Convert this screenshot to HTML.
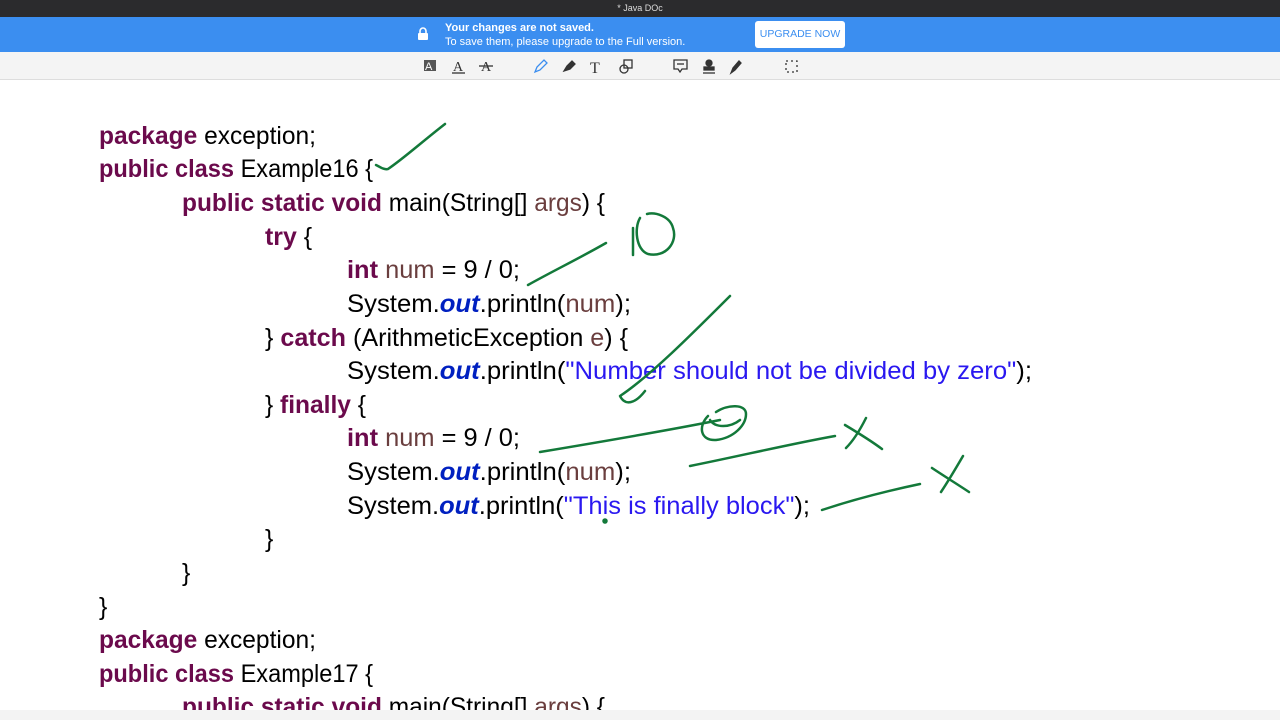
<!DOCTYPE html>
<html><head><meta charset="utf-8"><style>
body{margin:0;width:1280px;height:720px;overflow:hidden;background:#fff;font-family:"Liberation Sans",sans-serif;position:relative}
.top{position:absolute;left:0;top:0;width:1280px;height:17px;background:#2b2b2d;color:#ddd;font-size:9px;text-align:center;line-height:16px}
.ban{position:absolute;left:0;top:17px;width:1280px;height:35px;background:#3b8ef0;color:#fff}
.ban .t{position:absolute;left:445px;top:4px;font-size:11px;line-height:14px}
.ban .b{position:absolute;left:755px;top:4px;width:90px;height:27px;background:#fff;border-radius:3px;color:#3b8ef0;font-size:10.5px;text-align:center;line-height:27px}
.tb{position:absolute;left:0;top:52px;width:1280px;height:27px;background:#f4f4f4;border-bottom:1px solid #ddd}
.k{fill:#6b0a4c;font-weight:bold}.v{fill:#6a3e3e}.o{fill:#0020c0;font-weight:bold;font-style:italic}.s{fill:#2a18f0}
</style></head><body>
<div class="top">* Java DOc</div>
<div class="ban">
<svg style="position:absolute;left:417px;top:10px" width="12" height="14"><path d="M3 6V4a3 3 0 0 1 6 0v2" stroke="#fff" stroke-width="1.6" fill="none"/><rect x="1" y="6" width="10" height="7" rx="1" fill="#fff"/></svg>
<div class="t"><b>Your changes are not saved.</b><br>To save them, please upgrade to the Full version.</div>
<div class="b">UPGRADE NOW</div></div>
<div class="tb">
<svg width="1280" height="27" style="position:absolute;left:0;top:0" fill="none" stroke="#333" stroke-width="1.3">
<rect x="424" y="8" width="12" height="11" fill="#555" stroke="none"/><text x="425" y="18" font-size="11" fill="#fff" stroke="none">A</text>
<text x="453" y="19" font-size="14" font-family="Liberation Serif" fill="#333" stroke="none">A</text><line x1="452" y1="21" x2="465" y2="21"/>
<text x="481" y="19" font-size="14" font-family="Liberation Serif" fill="#333" stroke="none">A</text><line x1="479" y1="14" x2="493" y2="14"/>
<path d="M535 20l2-5 7-7 3 3-7 7z" stroke="#3b8ef0"/>
<path d="M564 19l3-5 5-5 3 3-5 5z" fill="#333"/>
<text x="590" y="21" font-size="16" font-family="Liberation Serif" fill="#333" stroke="none">T</text>
<circle cx="624" cy="17" r="4"/><rect x="624" y="8" width="8" height="8"/>
<path d="M674 8h13v9h-5l-2 3-2-3h-4z"/><line x1="677" y1="12" x2="684" y2="12"/>
<circle cx="709" cy="11" r="3" fill="#333"/><rect x="704" y="15" width="10" height="3" fill="#333"/><line x1="703" y1="21" x2="715" y2="21"/>
<path d="M731 21l2-5 6-7 2 2-6 7z" fill="#333"/>
<rect x="786" y="9" width="11" height="11" stroke-dasharray="2 3"/>
</svg></div>
<svg width="1280" height="720" style="position:absolute;left:0;top:0" font-family="'Liberation Sans',sans-serif" font-size="25">
<g>
<text x="99" y="144" textLength="217" lengthAdjust="spacingAndGlyphs"><tspan class="k">package</tspan> exception;</text>
<text x="99" y="177" textLength="274" lengthAdjust="spacingAndGlyphs"><tspan class="k">public class</tspan> Example16 {</text>
<text x="182" y="211" textLength="423" lengthAdjust="spacingAndGlyphs"><tspan class="k">public static void</tspan> main(String[] <tspan class="v">args</tspan>) {</text>
<text x="265" y="245" textLength="47" lengthAdjust="spacingAndGlyphs"><tspan class="k">try</tspan> {</text>
<text x="347" y="278" textLength="173" lengthAdjust="spacingAndGlyphs"><tspan class="k">int</tspan> <tspan class="v">num</tspan> = 9 / 0;</text>
<text x="347" y="312" textLength="284" lengthAdjust="spacingAndGlyphs">System.<tspan class="o">out</tspan>.println(<tspan class="v">num</tspan>);</text>
<text x="265" y="346" textLength="363" lengthAdjust="spacingAndGlyphs">} <tspan class="k">catch</tspan> (ArithmeticException <tspan class="v">e</tspan>) {</text>
<text x="347" y="379" textLength="685" lengthAdjust="spacingAndGlyphs">System.<tspan class="o">out</tspan>.println(<tspan class="s">"Number should not be divided by zero"</tspan>);</text>
<text x="265" y="413" textLength="101" lengthAdjust="spacingAndGlyphs">} <tspan class="k">finally</tspan> {</text>
<text x="347" y="446" textLength="173" lengthAdjust="spacingAndGlyphs"><tspan class="k">int</tspan> <tspan class="v">num</tspan> = 9 / 0;</text>
<text x="347" y="480" textLength="284" lengthAdjust="spacingAndGlyphs">System.<tspan class="o">out</tspan>.println(<tspan class="v">num</tspan>);</text>
<text x="347" y="514" textLength="463" lengthAdjust="spacingAndGlyphs">System.<tspan class="o">out</tspan>.println(<tspan class="s">"This is finally block"</tspan>);</text>
<text x="265" y="547">}</text>
<text x="182" y="581">}</text>
<text x="99" y="615">}</text>
<text x="99" y="648" textLength="217" lengthAdjust="spacingAndGlyphs"><tspan class="k">package</tspan> exception;</text>
<text x="99" y="682" textLength="274" lengthAdjust="spacingAndGlyphs"><tspan class="k">public class</tspan> Example17 {</text>
<text x="182" y="715" textLength="423" lengthAdjust="spacingAndGlyphs"><tspan class="k">public static void</tspan> main(String[] <tspan class="v">args</tspan>) {</text>
</g>
<g fill="none" stroke="#13793a" stroke-width="2.5" stroke-linecap="round" stroke-linejoin="round">
<path d="M376 165c4 2 8 5 12 4 15-10 35-28 57-45"/>
<path d="M633 228v27M640 218c-6 10-4 32 8 36 18 4 30-12 25-26-3-12-18-16-26-14"/>
<path d="M528 285c25-14 50-26 78-42"/>
<path d="M730 296c-40 40-80 80-110 100 5 10 15 8 25-5"/>
<path d="M540 452c60-10 120-20 180-32M708 416c-10 10-8 25 8 24 18-2 30-15 30-26 0-10-18-10-30-2M710 420c5 8 20 8 30 0"/>
<path d="M690 466c50-10 100-22 145-30M845 425c10 6 25 15 37 24M866 418c-5 10-12 22-20 30"/>
<path d="M822 510c30-10 60-18 98-26M932 468c12 8 25 16 37 24M963 456c-7 12-14 24-22 36"/>
<circle cx="605" cy="521" r="1.5" fill="#13793a"/>
</g></svg>
<div style="position:absolute;left:0;top:710px;width:1280px;height:10px;background:#f3f3f3"></div>
</body></html>
